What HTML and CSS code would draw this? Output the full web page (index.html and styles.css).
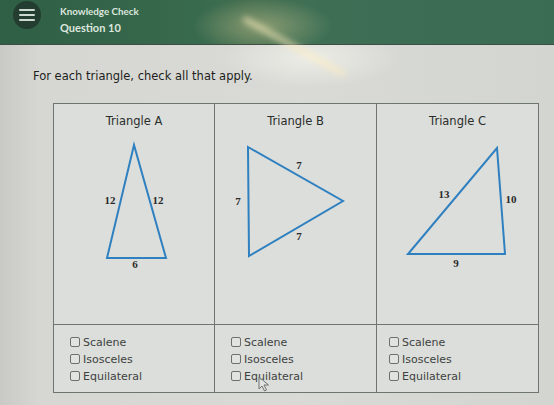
FILE: index.html
```html
<!DOCTYPE html>
<html>
<head>
<meta charset="utf-8">
<link rel="stylesheet" href="styles.css">
</head>
<body>
<div class="screen">
  <header class="topbar">
    <div class="menu-btn">
      <span class="bar"></span><span class="bar"></span><span class="bar"></span>
    </div>
    <div class="titles">
      <div class="kicker">Knowledge Check</div>
      <div class="qnum">Question 10</div>
    </div>
  </header>
  <main class="content">
    <p class="prompt">For each triangle, check all that apply.</p>
    <div class="grid">
      <div class="cell fig">
        <div class="label">Triangle A</div>
        <svg class="tri" width="160" height="184" viewBox="0 0 160 184">
          <polygon points="80,5 53,118 112,118" />
          <text x="56" y="60">12</text>
          <text x="104" y="60">12</text>
          <text x="81" y="124">6</text>
        </svg>
      </div>
      <div class="cell fig">
        <div class="label">Triangle B</div>
        <svg class="tri" width="160" height="184" viewBox="0 0 160 184">
          <polygon points="33,7 128,61 34,116" />
          <text x="84" y="25">7</text>
          <text x="23" y="61">7</text>
          <text x="84" y="96">7</text>
        </svg>
      </div>
      <div class="cell fig">
        <div class="label">Triangle C</div>
        <svg class="tri" width="160" height="184" viewBox="0 0 160 184">
          <polygon points="120,8 128,114 31,114" />
          <text x="67" y="54">13</text>
          <text x="134" y="59">10</text>
          <text x="79" y="123">9</text>
        </svg>
      </div>
      <div class="cell opts first">
        <div class="opt"><span class="box"></span>Scalene</div>
        <div class="opt"><span class="box"></span>Isosceles</div>
        <div class="opt"><span class="box"></span>Equilateral</div>
      </div>
      <div class="cell opts">
        <div class="opt"><span class="box"></span>Scalene</div>
        <div class="opt"><span class="box"></span>Isosceles</div>
        <div class="opt"><span class="box"></span>Equilateral</div>
      </div>
      <div class="cell opts last">
        <div class="opt"><span class="box"></span>Scalene</div>
        <div class="opt"><span class="box"></span>Isosceles</div>
        <div class="opt"><span class="box"></span>Equilateral</div>
      </div>
    </div>
  </main>
  <div class="glare"></div>
  <svg class="cursor" width="12" height="16" viewBox="0 0 12 16">
    <path d="M1 1 L1 13 L4 10 L6.5 15 L8.5 14 L6 9 L10.5 9 Z" />
  </svg>
</div>
</body>
</html>
```

FILE: styles.css
```css
html, body {
  margin: 0;
  padding: 0;
}
body {
  width: 554px;
  height: 405px;
  overflow: hidden;
  background: #d2d3ce;
}
.screen {
  position: relative;
  width: 554px;
  height: 405px;
  overflow: hidden;
  display: flex;
  flex-direction: column;
  background:
    radial-gradient(ellipse 90px 30px at 310px 58px, rgba(255,255,248,0.5), rgba(255,255,248,0) 100%),
    linear-gradient(90deg, #c9cac5 0px, #d6d7d2 40px, #d9dad5 300px, #d3d5d0 554px);
}
.glare {
  position: absolute;
  left: 236px;
  top: 44px;
  width: 116px;
  height: 5px;
  border-radius: 3px;
  background: rgba(255, 238, 190, 0.7);
  filter: blur(3px);
  transform: rotate(29deg);
  pointer-events: none;
}
.cursor {
  position: absolute;
  left: 258px;
  top: 376px;
}
.cursor path {
  fill: rgba(230, 232, 228, 0.6);
  stroke: #6f7571;
  stroke-width: 1;
  stroke-linejoin: round;
}
.topbar {
  height: 44px;
  flex: none;
  display: flex;
  align-items: flex-start;
  border-bottom: 1px solid #3d4e45;
  background:
    radial-gradient(ellipse 70px 28px at 262px 26px, rgba(190,190,140,0.55), rgba(190,190,140,0) 100%),
    linear-gradient(90deg, #2f5f44 0px, #386a4e 200px, #456f50 250px, #3e6f55 320px, #3a6c53 554px);
}
.menu-btn {
  width: 28px;
  height: 28px;
  margin: 1px 0 0 13px;
  border-radius: 50%;
  background: #233d30;
  display: flex;
  flex-direction: column;
  align-items: center;
  justify-content: center;
  gap: 3px;
}
.bar {
  display: block;
  width: 16px;
  height: 2px;
  border-radius: 1px;
  background: #cfd9d2;
}
.titles {
  margin: 6px 0 0 19px;
  font-family: Lato, "Open Sans", sans-serif;
  font-weight: 700;
  color: #dde6df;
}
.kicker {
  font-size: 9.8px;
  line-height: 11px;
}
.qnum {
  font-size: 11px;
  line-height: 15px;
  margin-top: 3px;
}
.content {
  flex: 1;
  padding: 0 0 0 53px;
}
.prompt {
  margin: 24px 0 0 -20px;
  font-family: "DejaVu Sans", Verdana, sans-serif;
  font-size: 11.5px;
  line-height: 15px;
  color: #1c1e1c;
}
.grid {
  margin-top: 19px;
  width: 484px;
  display: grid;
  grid-template-columns: 161px 162px 161px;
  grid-template-rows: 221px 67px;
  border: 1px solid #6e7470;
  background: #dcdedb;
}
.cell {
  border-right: 1px solid #6e7470;
}
.cell:nth-child(3), .cell:nth-child(6) {
  border-right: none;
}
.fig {
  display: flex;
  flex-direction: column;
  border-bottom: 1px solid #6e7470;
}
.label {
  height: 36px;
  line-height: 34px;
  text-align: center;
  font-family: "DejaVu Sans", Verdana, sans-serif;
  font-size: 11.5px;
  color: #2a2d2b;
}
.tri {
  display: block;
}
.tri polygon {
  fill: none;
  stroke: #2f80c0;
  stroke-width: 2;
  stroke-linejoin: miter;
}
.tri text {
  font-family: "Liberation Serif", "Times New Roman", serif;
  font-weight: 700;
  font-size: 11px;
  fill: #2a2a2a;
  text-anchor: middle;
  dominant-baseline: central;
}
.opts {
  display: flex;
  flex-direction: column;
  padding: 10px 0 0 16px;
  gap: 3px;
}
.opts.last {
  padding-left: 12px;
}
.opt {
  display: flex;
  align-items: center;
  height: 14px;
  font-family: "DejaVu Sans", Verdana, sans-serif;
  font-size: 11px;
  color: #3e423f;
}
.box {
  width: 8px;
  height: 8px;
  border: 1px solid #6c716e;
  border-radius: 2px;
  margin-right: 3px;
  background: #e1e3e0;
}
```
